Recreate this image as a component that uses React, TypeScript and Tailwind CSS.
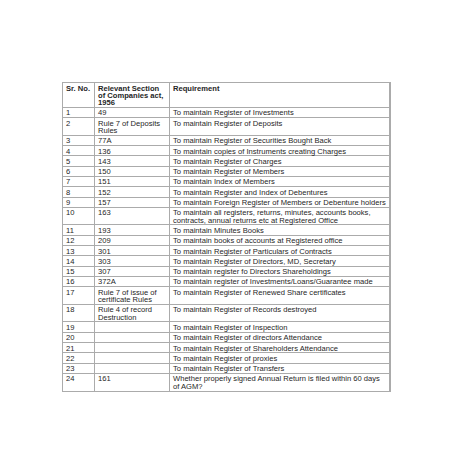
const rows: [string, string, string][] = [
  ["1", "49", "To maintain Register of Investments"],
  ["2", "Rule 7 of Deposits Rules", "To maintain Register of Deposits"],
  ["3", "77A", "To maintain Register of Securities Bought Back"],
  ["4", "136", "To maintain copies of Instruments creating Charges"],
  ["5", "143", "To maintain Register of Charges"],
  ["6", "150", "To maintain Register of Members"],
  ["7", "151", "To maintain Index of Members"],
  ["8", "152", "To maintain Register and Index of Debentures"],
  ["9", "157", "To maintain Foreign Register of Members or Debenture holders"],
  ["10", "163", "To maintain all registers, returns, minutes, accounts books, contracts, annual returns etc at Registered Office"],
  ["11", "193", "To maintain Minutes Books"],
  ["12", "209", "To maintain books of accounts at Registered office"],
  ["13", "301", "To maintain Register of Particulars of Contracts"],
  ["14", "303", "To maintain Register of Directors, MD, Secretary"],
  ["15", "307", "To maintain register fo Directors Shareholdings"],
  ["16", "372A", "To maintain register of Investments/Loans/Guarantee made"],
  ["17", "Rule 7 of issue of certificate Rules", "To maintain Register of Renewed Share certificates"],
  ["18", "Rule 4 of record Destruction", "To maintain Register of Records destroyed"],
  ["19", "", "To maintain Register of Inspection"],
  ["20", "", "To maintain Register of directors Attendance"],
  ["21", "", "To maintain Register of Shareholders Attendance"],
  ["22", "", "To maintain Register of proxies"],
  ["23", "", "To maintain Register of Transfers"],
  ["24", "161", "Whether properly signed Annual Return is filed within 60 days of AGM?"],
]

export default function App() {
  return (
    <div className="min-h-[452px] w-[452px] bg-white pl-[62px] pt-[82px] text-[#262626]" style={{ fontFamily: '"Liberation Sans", Arial, sans-serif' }}>
      <table className="w-[327px] table-fixed border-collapse border-r-2 border-[#ababab] text-[7.6px] leading-[7.3px]">
        <colgroup>
          <col className="w-[32px]" />
          <col className="w-[75px]" />
          <col className="w-[220px]" />
        </colgroup>
        <thead>
          <tr className="align-top font-bold">
            <th className="border border-[#ababab] pl-[3px] pr-[1px] pb-[0.5px] pt-[1.5px] text-left">Sr. No.</th>
            <th className="border border-[#ababab] pl-[3px] pr-[1px] pb-[0.5px] pt-[1.5px] text-left">
              Relevant Section of Companies act, 1956
            </th>
            <th className="border border-[#ababab] border-r-2 pl-[3px] pr-[1px] pb-[0.5px] pt-[1.5px] text-left">Requirement</th>
          </tr>
        </thead>
        <tbody>
          {rows.map(([sr, sec, req]) => (
            <tr key={sr} className="align-top">
              <td className={`border border-[#ababab] pl-[3px] pr-[1px] pt-[1.5px] ${sr === "18" ? "pb-[3px]" : "pb-[0.5px]"}`}>{sr}</td>
              <td className="border border-[#ababab] pl-[3px] pr-[1px] pt-[1.5px] pb-[0.5px]">{sec}</td>
              <td className="border border-[#ababab] border-r-2 pl-[3px] pr-[1px] pt-[1.5px] pb-[0.5px]">{req}</td>
            </tr>
          ))}
        </tbody>
      </table>
    </div>
  )
}
